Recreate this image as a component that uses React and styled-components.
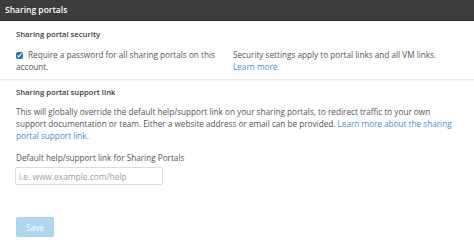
import React from 'react';
import styled, { createGlobalStyle } from 'styled-components';

const Global = createGlobalStyle`
  html, body {
    margin: 0;
    padding: 0;
    background: #ffffff;
  }
  body {
    font-family: "Open Sans", "Noto Sans", sans-serif;
    color: #555555;
  }
`;

const Page = styled.div`
  width: 474px;
  height: 244px;
  overflow: hidden;
  background: #fff;
`;

const Header = styled.div`
  height: 21px;
  background: #3c3c3c;
  color: #ffffff;
  font-size: 8.5px;
  font-weight: 600;
  line-height: 20px;
  padding-left: 5px;
  border-bottom: 1px solid #2b2b2b;
  box-sizing: border-box;
`;

const Section = styled.div`
  padding: ${(p) => p.pad || '7px 16px 6px'};
  border-bottom: ${(p) => (p.divided ? '1px solid #e8e8e8' : 'none')};
  box-shadow: ${(p) => (p.divided ? '0 1px 1px rgba(0,0,0,0.03)' : 'none')};
`;

const Title = styled.div`
  font-size: 7.7px;
  font-weight: 600;
  line-height: 12px;
  color: #3d3d3d;
  margin-bottom: ${(p) => p.mb || '9px'};
`;

const Columns = styled.div`
  display: grid;
  grid-template-columns: 217px 1fr;
`;

const Text = styled.div`
  font-size: 8.2px;
  line-height: 12px;
  color: #555555;
  max-width: ${(p) => p.maxw || 'none'};
`;

const Check = styled.input.attrs({ type: 'checkbox' })`
  width: 7px;
  height: 7px;
  margin: 0 5px 0 0;
  vertical-align: -1px;
  accent-color: #1f6fc5;
`;

const Link = styled.a`
  color: #4a90c8;
  text-decoration: none;
`;

const Label = styled.div`
  font-size: 8.2px;
  line-height: 12px;
  color: #555555;
  margin: 10px 0 3px;
`;

const Field = styled.input`
  display: block;
  width: 148px;
  height: 18px;
  margin-left: -1px;
  box-sizing: border-box;
  border: 1px solid #dddddd;
  border-radius: 2px;
  padding: 0 3px;
  font-family: "Open Sans", sans-serif;
  font-size: 8.4px;
  color: #333;
  outline: none;
  &::placeholder {
    color: #a0a0a0;
  }
`;

const Button = styled.button`
  display: block;
  margin-top: 32px;
  width: 38px;
  height: 20px;
  border: 1px solid #a9d3ef;
  border-radius: 2px;
  background: #aed7f2;
  color: #ffffff;
  font-family: "Open Sans", sans-serif;
  font-size: 8.2px;
  padding: 0;
`;

export default function App() {
  return (
    <Page>
      <Global />
      <Header>Sharing portals</Header>
      <Section divided pad="7px 16px 6px">
        <Title>Sharing portal security</Title>
        <Columns>
          <Text maxw="205px">
            <Check defaultChecked />
            Require a password for all sharing portals on this account.
          </Text>
          <Text>
            Security settings apply to portal links and all VM links.
            <br />
            <Link href="#">Learn more.</Link>
          </Text>
        </Columns>
      </Section>
      <Section pad="6px 16px 0">
        <Title mb="8px">Sharing portal support link</Title>
        <Text maxw="442px">
          This will globally override the default help/support link on your sharing portals, to
          redirect traffic to your own support documentation or team. Either a website address or
          email can be provided.{' '}
          <Link href="#">Learn more about the sharing portal support link.</Link>
        </Text>
        <Label>Default help/support link for Sharing Portals</Label>
        <Field placeholder="i.e. www.example.com/help" />
        <Button>Save</Button>
      </Section>
    </Page>
  );
}
